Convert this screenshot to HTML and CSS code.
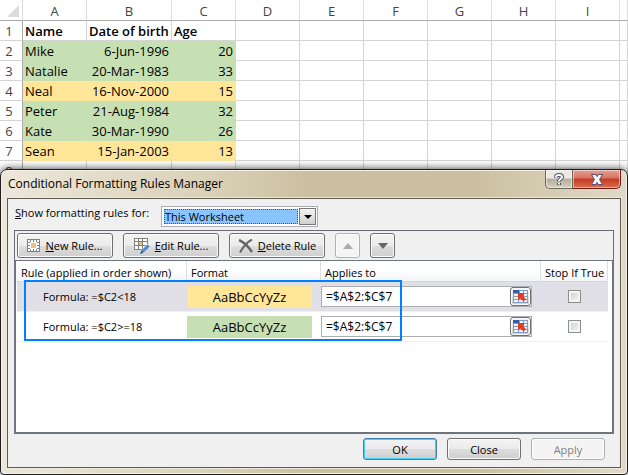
FILE: index.html
```html
<!DOCTYPE html>
<html lang="en">
<head>
    <meta charset="UTF-8">
    <title>Conditional Formatting Rules Manager</title>
    <link rel="stylesheet" href="styles.css">
</head>
<body>

<table class="sheet">
    <colgroup>
        <col class="col-num"><col class="col-std"><col class="col-date"><col class="col-std">
        <col class="col-std"><col class="col-std"><col class="col-std"><col class="col-std">
        <col class="col-std"><col class="col-std"><col>
    </colgroup>
    <thead>
        <tr>
            <th class="corner"><svg width="12" height="12" viewBox="0 0 12 12"><path d="M12 0V12H0Z" fill="#dcdcdc"/></svg></th>
            <th>A</th><th>B</th><th>C</th><th>D</th><th>E</th><th>F</th><th>G</th><th>H</th><th>I</th><th></th>
        </tr>
    </thead>
    <tbody>
        <tr class="names"><th>1</th><td>Name</td><td>Date of birth</td><td>Age</td><td></td><td></td><td></td><td></td><td></td><td></td><td></td></tr>
        <tr class="adult"><th>2</th><td>Mike</td><td>6-Jun-1996</td><td>20</td><td></td><td></td><td></td><td></td><td></td><td></td><td></td></tr>
        <tr class="adult"><th>3</th><td>Natalie</td><td>20-Mar-1983</td><td>33</td><td></td><td></td><td></td><td></td><td></td><td></td><td></td></tr>
        <tr class="minor"><th>4</th><td>Neal</td><td>16-Nov-2000</td><td>15</td><td></td><td></td><td></td><td></td><td></td><td></td><td></td></tr>
        <tr class="adult"><th>5</th><td>Peter</td><td>21-Aug-1984</td><td>32</td><td></td><td></td><td></td><td></td><td></td><td></td><td></td></tr>
        <tr class="adult"><th>6</th><td>Kate</td><td>30-Mar-1990</td><td>26</td><td></td><td></td><td></td><td></td><td></td><td></td><td></td></tr>
        <tr class="minor"><th>7</th><td>Sean</td><td>15-Jan-2003</td><td>13</td><td></td><td></td><td></td><td></td><td></td><td></td><td></td></tr>
        <tr><th>8</th><td></td><td></td><td></td><td></td><td></td><td></td><td></td><td></td><td></td><td></td></tr>
    </tbody>
</table>

<div class="dialog" role="dialog" aria-labelledby="dlg-title">
    <div class="titlebar">
        <span class="title" id="dlg-title">Conditional Formatting Rules Manager</span>
        <div class="winbtns">
            <button type="button" class="help" aria-label="Help">
                <svg width="10" height="13" viewBox="0 0 10 13" fill="none"><path d="M2 4.5V3.5C2 1.5 8 1.5 8 4C8 6 5 6 5 8.5M5 10V12" stroke="#4e4e66" stroke-width="4"/><path d="M2 4.2V3.5C2 1.5 8 1.5 8 4C8 6 5 6 5 8.2M5 10V11.6" stroke="#fff" stroke-width="2"/></svg>
            </button>
            <button type="button" class="close" aria-label="Close window">
                <svg width="12" height="11" viewBox="0 0 12 11"><path d="M.5 .5H4.8L6 2.5L7.2 .5H11.5L8.6 5.5L11.5 10.5H7.2L6 8.5L4.8 10.5H.5L3.4 5.5Z" fill="#f6f6f8" stroke="#54506a"/></svg>
            </button>
        </div>
    </div>

    <div class="client">
        <div class="scope">
            <label for="scope"><u>S</u>how formatting rules for:</label>
            <div class="combo">
                <select id="scope"><option>This Worksheet</option></select>
                <span class="arrow"><svg width="8" height="4" viewBox="0 0 8 4"><path d="M0 0H8L4 4Z" fill="#000"/></svg></span>
            </div>
        </div>

        <div class="toolbar">
            <button type="button" class="btn tool">
                <svg width="13" height="13" viewBox="0 0 13 13" shape-rendering="crispEdges"><path d="M0 0H13V13H0Z" fill="#808080"/><path d="M1 1h2v2h-2zM4 1h2v2h-2zM7 1h2v2h-2zM10 1h2v2h-2zM1 4h2v2h-2zM10 4h2v2h-2zM1 7h2v2h-2zM10 7h2v2h-2zM1 10h2v2h-2zM4 10h2v2h-2zM7 10h2v2h-2zM10 10h2v2h-2zM3 3h7v7h-7z" fill="#fff"/><path d="M4 4h5v5h-5z" fill="#eec07c"/></svg>
                <span><u>N</u>ew Rule...</span>
            </button>
            <button type="button" class="btn tool">
                <svg width="16" height="16" viewBox="0 0 16 16"><path d="M0 0H14V12H0Z" fill="#808080"/><path d="M1 1h3v2h-3zM5 1h3v2h-3zM9 1h4v2h-4zM1 4h3v3h-3zM9 4h4v3h-4zM1 8h3v3h-3zM5 8h3v3h-3zM9 8h4v3h-4z" fill="#fff"/><path d="M5 4h3v3h-3z" fill="#eec07c"/><path d="M6 16L7.5 12L13.5 6L16 8.5L10 14.5Z" fill="#4d8cc8" stroke="#fff" stroke-width=".5"/><path d="M6 16L7.3 12.5L9.5 14.7Z" fill="#2c5d92"/></svg>
                <span><u>E</u>dit Rule...</span>
            </button>
            <button type="button" class="btn tool">
                <svg width="15" height="14" viewBox="0 0 15 14" fill="none" stroke="#666"><path d="M1 1C6 3 10 7 14 13" stroke-width="2.5"/><path d="M14 .5C9 3 5 8 2 13.5" stroke-width="2"/></svg>
                <span><u>D</u>elete Rule</span>
            </button>
            <button type="button" class="btn move" aria-label="Move up" disabled><svg width="10" height="6" viewBox="0 0 10 6"><path d="M5 0L10 6H0Z" fill="#aaa"/></svg></button>
            <button type="button" class="btn move" aria-label="Move down"><svg width="10" height="6" viewBox="0 0 10 6"><path d="M0 0H10L5 6Z" fill="#666"/></svg></button>
        </div>

        <div class="list">
            <table class="rules">
                <colgroup><col class="c-rule"><col class="c-format"><col><col class="c-stop"></colgroup>
                <thead>
                    <tr><th>Rule (applied in order shown)</th><th>Format</th><th>Applies to</th><th>Stop If True</th></tr>
                </thead>
                <tbody>
                    <tr class="selected">
                        <td class="formula">Formula: =$C2&lt;18</td>
                        <td><div class="swatch yellow">AaBbCcYyZz</div></td>
                        <td>
                            <div class="range">
                                <input type="text" value="=$A$2:$C$7" aria-label="Applies to, rule 1">
                                <button type="button" class="btn pick" aria-label="Select range, rule 1"><svg width="15" height="13" viewBox="0 0 15 13"><path d="M0 0H15V13H0Z" fill="#7f9cc8"/><path d="M0 0H6V3H0Z" fill="#2e5fae"/><path d="M7 1h3v2h-3zM11 1h3v2h-3zM1 4h4v2h-4zM6 4h4v2h-4zM11 4h3v2h-3zM1 7h4v2h-4zM6 7h4v2h-4zM11 7h3v2h-3zM1 10h4v2h-4zM6 10h4v2h-4zM11 10h3v2h-3z" fill="#f2f6fc"/><path d="M5 3H11V5L10 6L13 9L10.5 11.5L7.5 8.5L5 10Z" fill="#e03c20"/></svg></button>
                            </div>
                        </td>
                        <td class="stop"><input type="checkbox" aria-label="Stop if true, rule 1"></td>
                    </tr>
                    <tr>
                        <td class="formula">Formula: =$C2&gt;=18</td>
                        <td><div class="swatch green">AaBbCcYyZz</div></td>
                        <td>
                            <div class="range">
                                <input type="text" value="=$A$2:$C$7" aria-label="Applies to, rule 2">
                                <button type="button" class="btn pick" aria-label="Select range, rule 2"><svg width="15" height="13" viewBox="0 0 15 13"><path d="M0 0H15V13H0Z" fill="#7f9cc8"/><path d="M0 0H6V3H0Z" fill="#2e5fae"/><path d="M7 1h3v2h-3zM11 1h3v2h-3zM1 4h4v2h-4zM6 4h4v2h-4zM11 4h3v2h-3zM1 7h4v2h-4zM6 7h4v2h-4zM11 7h3v2h-3zM1 10h4v2h-4zM6 10h4v2h-4zM11 10h3v2h-3z" fill="#f2f6fc"/><path d="M5 3H11V5L10 6L13 9L10.5 11.5L7.5 8.5L5 10Z" fill="#e03c20"/></svg></button>
                            </div>
                        </td>
                        <td class="stop"><input type="checkbox" aria-label="Stop if true, rule 2"></td>
                    </tr>
                </tbody>
            </table>
            <div class="highlight"></div>
        </div>

        <div class="footer">
            <button type="button" class="btn action default">OK</button>
            <button type="button" class="btn action">Close</button>
            <button type="button" class="btn action" disabled>Apply</button>
        </div>
    </div>
</div>

</body>
</html>
```
FILE: styles.css
```css
* {
    box-sizing: border-box;
}
body {
    margin: 0;
    min-height: 100vh;
    position: relative;
    overflow: hidden;
    background: #fff;
    font-family: "Open Sans", "Noto Sans", sans-serif;
    font-size: 11px;
    color: #000;
}
button, input, select {
    font: inherit;
    color: inherit;
    margin: 0;
    padding: 0;
}
svg {
    display: block;
    flex: none;
}

/* worksheet */
.sheet {
    width: 100%;
    table-layout: fixed;
    border-collapse: separate;
    border-spacing: 0;
    font-size: 13px;
    line-height: 17px;
}
.col-num { width: 23px; }
.col-std { width: 64px; }
.col-date { width: 85px; }
.sheet th,
.sheet td {
    height: 20px;
    padding: 2px 2px 0;
    border-right: 1px solid #d4d4d4;
    border-bottom: 1px solid #d4d4d4;
    white-space: nowrap;
}
.sheet th {
    padding: 2px 0 0;
    font-weight: normal;
    color: #444;
    text-align: center;
}
.sheet thead th {
    height: 21px;
    border-bottom-color: #ababab;
    border-right-color: #dcdcdc;
}
.sheet tbody th {
    padding-right: 4px;
    border-right-color: #ababab;
}
.sheet .corner svg {
    margin: 0 3px 0 auto;
}
.names td {
    font-weight: 600;
}
.adult td:nth-child(n+3):nth-child(-n+4),
.minor td:nth-child(n+3):nth-child(-n+4) {
    text-align: right;
}
.adult td:nth-child(-n+4) {
    background: #c6e0b4;
    border-color: #c6e0b4;
}
.minor td:nth-child(-n+4) {
    background: #ffe699;
    border-color: #ffe699;
}

/* dialog window */
.dialog {
    position: absolute;
    top: 169px;
    right: 0;
    bottom: 0;
    left: 0;
    display: flex;
    flex-direction: column;
    padding: 0 6px 6px;
    border: 1px solid #1e1e1e;
    border-radius: 7px 7px 4px 4px;
    background: linear-gradient(90deg, #ece7da, #d8cfb6 35%, #cabf9f 50%, #cabf9f 75%, #e0d9c8);
    box-shadow: inset 0 0 0 1px #f5f1e4, 0 0 8px rgba(0,0,0,0.8);
}
.titlebar {
    display: flex;
    justify-content: space-between;
    height: 28px;
    padding-left: 1px;
}
.title {
    font-size: 12px;
    line-height: 28px;
}
.winbtns {
    display: flex;
    height: 19px;
}
.winbtns button {
    display: flex;
    align-items: center;
    justify-content: center;
    border: 1px solid #6b665c;
    border-top: 0;
    box-shadow: inset 0 0 0 1px rgba(255,255,255,0.5);
}
.help {
    width: 28px;
    border-radius: 0 0 0 5px;
    background: linear-gradient(#ece9e2 45%, #b3ad9c 50%, #d6d0be);
}
.winbtns .close {
    width: 48px;
    border-color: #6a1c12;
    border-left: 0;
    border-radius: 0 0 5px 0;
    background: linear-gradient(#e3a093, #d8735f 45%, #c23a22 50%, #dd6d4c);
}
.client {
    flex: 1;
    display: flex;
    flex-direction: column;
    padding: 7px 6px;
    border: 1px solid #5d5a50;
    outline: 1px solid #eee9da;
    background: #f0f0f0;
}

.scope {
    display: flex;
    align-items: flex-start;
    margin-bottom: 3px;
}
.scope label {
    width: 147px;
    padding-left: 1px;
    line-height: 14px;
    white-space: nowrap;
}
.combo {
    display: flex;
    width: 157px;
    height: 21px;
    padding: 2px;
    border: 1px solid #abadb3;
    background: #fff;
}
.combo select {
    flex: 1;
    appearance: none;
    border: 1px dotted #7a4a10;
    border-radius: 0;
    background: #8ac4fe;
    line-height: 13px;
}
.arrow {
    display: flex;
    align-items: center;
    justify-content: center;
    width: 17px;
    margin: -1px -1px -1px 1px;
    border: 1px solid #777;
    background: linear-gradient(#f4f4f4, #d0d0d0);
    pointer-events: none;
}

.btn {
    display: flex;
    align-items: center;
    justify-content: center;
    border: 1px solid #707070;
    border-radius: 3px;
    background: linear-gradient(#f3f3f3, #ebebeb 50%, #dddddd 51%, #cfcfcf);
    box-shadow: inset 0 0 0 1px #fbfbfb;
}
.btn:disabled {
    border-color: #adb2b5;
    background: #f4f4f4;
    color: #838383;
}
.toolbar {
    display: flex;
    gap: 10px;
    padding: 2px;
    border: 1px solid #6b6b73;
    border-bottom: 0;
}
.tool {
    width: 96px;
    height: 25px;
    gap: 5px;
}
.move {
    width: 25px;
    height: 25px;
}

/* rule list */
.list {
    position: relative;
    flex: 1;
    padding: 0 4px 0 1px;
    border: 2px solid #70747c;
    border-top-width: 1px;
    background: #fff;
}
.rules {
    width: 100%;
    table-layout: fixed;
    border-collapse: separate;
    border-spacing: 0;
}
.c-rule { width: 170px; }
.c-format { width: 134px; }
.c-stop { width: 67px; }
.rules th {
    height: 21px;
    padding: 2px 0 0 4px;
    border-right: 1px solid #dfdfe3;
    border-bottom: 1px solid #d5d5d5;
    background: linear-gradient(#fff 40%, #f4f5f7);
    font-weight: normal;
    text-align: left;
    white-space: nowrap;
}
.rules td {
    height: 30px;
    padding: 0;
    border-bottom: 1px solid #f0f0f0;
}
.selected td {
    background: #e0dfe5;
}
.rules .formula {
    padding-left: 26px;
}
.swatch {
    width: 125px;
    height: 22px;
    font-size: 13px;
    line-height: 22px;
    text-align: center;
}
.yellow { background: #ffe699; }
.green { background: #c6e0b4; }
.range {
    display: flex;
    height: 21px;
    margin-right: 9px;
    border: 1px solid #abadb3;
    background: #fff;
}
.range input {
    flex: 1;
    min-width: 0;
    padding-left: 4px;
    border: 0;
    background: none;
    font-size: 12px;
}
.pick {
    width: 21px;
}
.stop {
    text-align: center;
}
.stop input {
    appearance: none;
    display: block;
    width: 13px;
    height: 13px;
    margin: 0 auto;
    border: 1px solid #8e8f8f;
    background: linear-gradient(135deg, #cbcfd5, #f6f6f6);
    box-shadow: inset 0 0 0 2px #f4f4f4;
}
.highlight {
    position: absolute;
    top: 19px;
    left: 8px;
    width: 378px;
    height: 61px;
    border: 2px solid #0080ff;
    pointer-events: none;
}

.footer {
    display: flex;
    justify-content: flex-end;
    gap: 10px;
    padding: 4px 9px 0 0;
}
.action {
    width: 74px;
    height: 22px;
}
.default {
    border-color: #3c7fb1;
    box-shadow: inset 0 0 0 1px #46d0f7;
}
```
